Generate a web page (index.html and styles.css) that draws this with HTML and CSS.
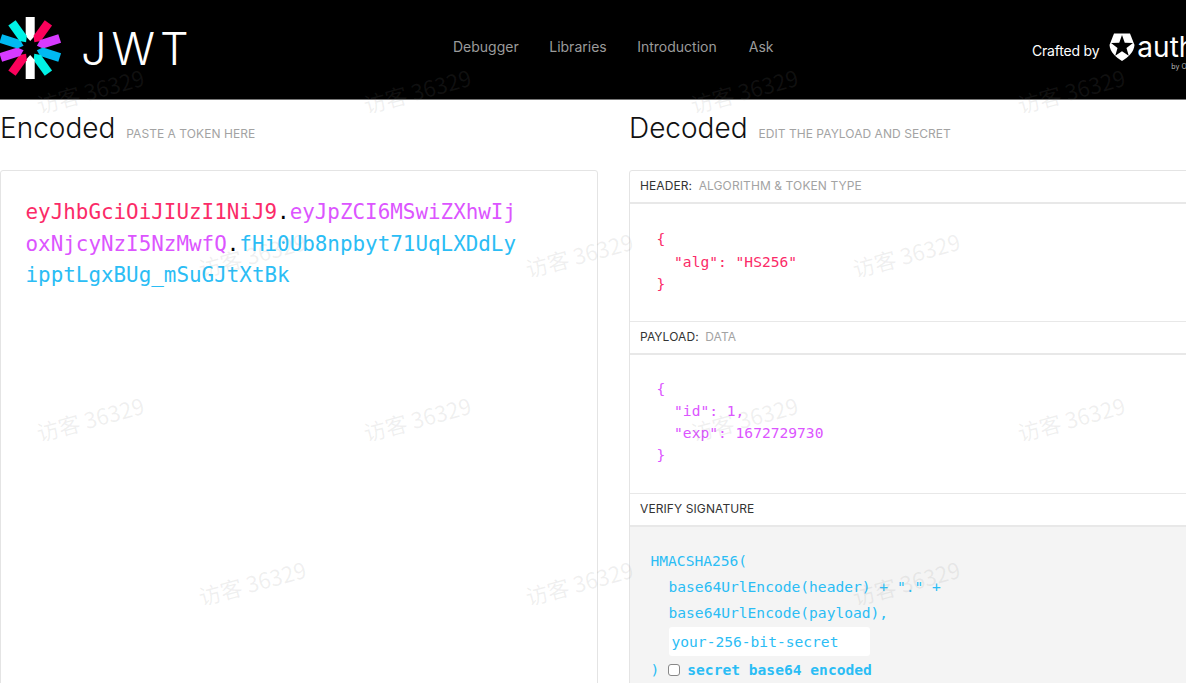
FILE: index.html
```html
<!DOCTYPE html>
<html lang="en">
<head>
<meta charset="utf-8">
<title>JWT Debugger</title>
<link rel="stylesheet" href="styles.css">
</head>
<body>
<div class="page">
  <header class="topbar">
    <div class="brand">
      <svg class="star" width="62" height="64" viewBox="0 0 62 64" aria-hidden="true">
        <g transform="translate(30.2 32)">
          <polygon points="-4.500,-31 4.500,-31 4.500,-12 0,-7 -4.500,-12" fill="#fff"/>
          <polygon points="-4.500,-31 4.500,-31 4.500,-12 0,-7 -4.500,-12" fill="#fb015b" transform="rotate(36)"/>
          <polygon points="-4.500,-31 4.500,-31 4.500,-12 0,-7 -4.500,-12" fill="#d63aff" transform="rotate(72)"/>
          <polygon points="-4.500,-31 4.500,-31 4.500,-12 0,-7 -4.500,-12" fill="#00b9f1" transform="rotate(108)"/>
          <polygon points="-4.500,-31 4.500,-31 4.500,-12 0,-7 -4.500,-12" fill="#00f2e6" transform="rotate(144)"/>
          <polygon points="-4.500,-31 4.500,-31 4.500,-12 0,-7 -4.500,-12" fill="#fff" transform="rotate(180)"/>
          <polygon points="-4.500,-31 4.500,-31 4.500,-12 0,-7 -4.500,-12" fill="#fb015b" transform="rotate(216)"/>
          <polygon points="-4.500,-31 4.500,-31 4.500,-12 0,-7 -4.500,-12" fill="#d63aff" transform="rotate(252)"/>
          <polygon points="-4.500,-31 4.500,-31 4.500,-12 0,-7 -4.500,-12" fill="#00b9f1" transform="rotate(288)"/>
          <polygon points="-4.500,-31 4.500,-31 4.500,-12 0,-7 -4.500,-12" fill="#00f2e6" transform="rotate(324)"/>
        </g>
      </svg>
      <span class="wordmark">JWT</span>
    </div>
    <nav class="nav">
      <a>Debugger</a>
      <a>Libraries</a>
      <a>Introduction</a>
      <a>Ask</a>
    </nav>
    <div class="crafted">
      <span class="crafted-by">Crafted by</span>
      <svg class="shield" width="26" height="28" viewBox="0 0 26 28" aria-hidden="true">
        <path fill="#fff" d="M5 .5 H21 L25.500 12 C25 19 19 24.500 13 28 C7 24.500 1 19 .5 12 Z"/>
        <polygon fill="#000" points="13,2 15.760,9.700 23.940,9.950 17.470,14.950 19.760,22.800 13,18.200 6.240,22.800 8.530,14.950 2.060,9.950 10.240,9.700"/>
      </svg>
      <span class="auth-block">
        <span class="auth-name">auth0</span>
        <span class="auth-by">by Okta</span>
      </span>
    </div>
  </header>

  <main class="columns">
    <section class="column">
      <h2 class="col-title">Encoded <small>PASTE A TOKEN HERE</small></h2>
      <div class="panel encoded">
        <div class="token"><span class="red">eyJhbGciOiJIUzI1NiJ9</span>.<span class="purple">eyJpZCI6MSwiZXhwIj<br>oxNjcyNzI5NzMwfQ</span>.<span class="blue">fHi0Ub8npbyt71UqLXDdLy<br>ipptLgxBUg_mSuGJtXtBk</span></div>
      </div>
    </section>

    <section class="column">
      <h2 class="col-title">Decoded <small>EDIT THE PAYLOAD AND SECRET</small></h2>
      <div class="panel decoded">
        <div class="sec-head">HEADER: <small>ALGORITHM &amp; TOKEN TYPE</small></div>
        <pre class="sec-body json red head-body">{
  "alg": "HS256"
}</pre>
        <div class="sec-head">PAYLOAD: <small>DATA</small></div>
        <pre class="sec-body json purple payload-body">{
  "id": 1,
  "exp": 1672729730
}</pre>
        <div class="sec-head">VERIFY SIGNATURE</div>
        <div class="sec-body verify blue">
          <div class="v-line">HMACSHA256(</div>
          <div class="v-line indent">base64UrlEncode(header) + "." +</div>
          <div class="v-line indent">base64UrlEncode(payload),</div>
          <div class="indent"><span class="secret">your-256-bit-secret</span></div>
          <div class="v-close">)<span class="check"></span><b>secret base64 encoded</b></div>
        </div>
      </div>
    </section>
  </main>

  <div class="wm w1">访客 36329</div>
  <div class="wm w2">访客 36329</div>
  <div class="wm w3">访客 36329</div>
  <div class="wm w4">访客 36329</div>
  <div class="wm w5">访客 36329</div>
  <div class="wm w6">访客 36329</div>
  <div class="wm w7">访客 36329</div>
  <div class="wm w8">访客 36329</div>
  <div class="wm w9">访客 36329</div>
  <div class="wm w10">访客 36329</div>
  <div class="wm w11">访客 36329</div>
  <div class="wm w12">访客 36329</div>
  <div class="wm w13">访客 36329</div>
  <div class="wm w14">访客 36329</div>
</div>
</body>
</html>
```

FILE: styles.css
```css
* { box-sizing: border-box; }
html, body { margin: 0; padding: 0; }
body { background: #fff; font-family: "Inter", "Noto Sans CJK SC", sans-serif; color: #000; }
.page { position: relative; width: 1186px; height: 683px; overflow: hidden; }

.topbar { display: flex; align-items: flex-start; height: 100px; background: #000; border-bottom: 1px solid #777; }
.brand { display: flex; align-items: center; width: 453px; height: 96px; flex: none; }
.star { flex: none; }
.wordmark { margin-left: 19px; color: #fff; font-family: "Inter", sans-serif; font-weight: 300; font-size: 45px; letter-spacing: 5px; line-height: 1; white-space: nowrap; }
.nav { display: flex; gap: 30.5px; padding-top: 38px; width: 579px; flex: none; }
.nav a { color: #9b9b9b; font-size: 14px; line-height: 17px; }
.nav a:last-child { margin-left: 1.5px; }
.crafted { display: flex; align-items: flex-start; flex: none; padding-top: 33px; }
.crafted-by { color: #fff; font-size: 14px; line-height: 17px; margin-top: 9px; letter-spacing: -.2px; white-space: nowrap; }
.shield { flex: none; margin-left: 10px; }
.auth-block { display: flex; flex-direction: column; margin-left: 2px; }
.auth-name { color: #fff; font-size: 28px; line-height: 28px; }
.auth-by { color: #bbb; font-size: 7px; line-height: 9px; margin-left: 34px; margin-top: 1px; white-space: nowrap; }

.columns { display: grid; grid-template-columns: 598px 640px; column-gap: 31px; }
.col-title { margin: 0; height: 70px; padding-top: 10px; font-weight: 300; font-size: 28px; line-height: 36px; color: #111; white-space: nowrap; }
.col-title small { margin-left: 3px; font-size: 12px; font-weight: 400; color: #a3a3a3; letter-spacing: .05px; }

.panel { border: 1px solid #e4e4e4; border-radius: 3px; height: 560px; }
.decoded { margin-left: -.5px; }
.encoded { padding: 26px 24.5px; }
.token { font-family: "DejaVu Sans Mono", monospace; font-size: 20.9px; line-height: 31.5px; color: #000; }
.red { color: #fb2b68; }
.purple { color: #dc55ff; }
.blue { color: #2bbdf5; }

.sec-head { height: 33px; padding-left: 10.5px; border-bottom: 2px solid #e8e8e8; font-size: 12px; line-height: 30px; font-weight: 400; color: #333; letter-spacing: .1px; }
.sec-head small { margin-left: 3px; font-size: 12px; color: #a3a3a3; }
.sec-body { margin: 0; font-family: "DejaVu Sans Mono", monospace; font-size: 14.6px; line-height: 22.5px; }
.json { padding: 24px 0 0 27px; border-bottom: 1px solid #e8e8e8; }
.head-body { height: 118px; }
.payload-body { height: 139px; line-height: 22px; padding-top: 23px; }
.verify { background: #f4f4f4; height: 170px; padding: 21px 0 0 21px; }
.v-line { height: 26px; line-height: 26px; }
.indent { padding-left: 18px; }
.secret { display: block; width: 201px; height: 29px; margin-top: 1px; background: #fff; border-radius: 3px; padding-left: 3px; line-height: 29px; }
.v-close { display: flex; align-items: center; height: 28px; }
.check { width: 12px; height: 12px; margin: 0 7px 0 9px; background: #fff; border: 1px solid #888; border-radius: 3px; }
.v-close b { font-weight: 700; }

.wm { position: absolute; width: 120px; margin-left: -60px; margin-top: -13px; text-align: center; font-family: "Noto Sans CJK SC", sans-serif; font-size: 22px; line-height: 26px; color: rgba(128, 128, 128, .12); white-space: nowrap; transform: rotate(-15deg); pointer-events: none; }
.w1 { left: 90px; top: 90px; }
.w2 { left: 417px; top: 90px; }
.w3 { left: 744px; top: 90px; }
.w4 { left: 1071px; top: 90px; }
.w5 { left: 252px; top: 254px; }
.w6 { left: 579px; top: 254px; }
.w7 { left: 906px; top: 254px; }
.w8 { left: 90px; top: 418px; }
.w9 { left: 417px; top: 418px; }
.w10 { left: 744px; top: 418px; }
.w11 { left: 1071px; top: 418px; }
.w12 { left: 252px; top: 582px; }
.w13 { left: 579px; top: 582px; }
.w14 { left: 906px; top: 582px; }
```
